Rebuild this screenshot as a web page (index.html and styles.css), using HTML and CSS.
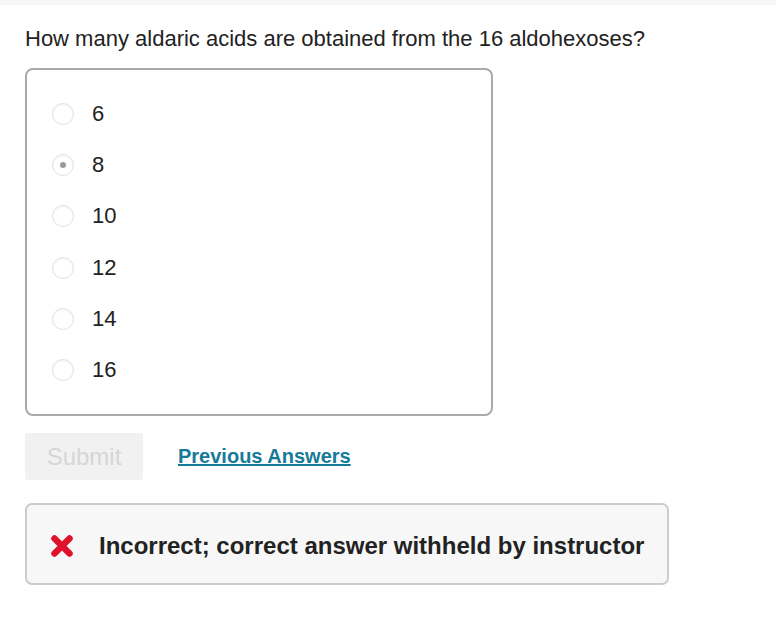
FILE: index.html
```html
<!DOCTYPE html>
<html>
<head>
<meta charset="utf-8">
<link rel="stylesheet" href="styles.css">
</head>
<body>
<div class="topbar"></div>
<main class="content">
  <p class="question">How many aldaric acids are obtained from the 16 aldohexoses?</p>
  <div class="choices">
    <label class="choice"><span class="radio"></span><span class="val">6</span></label>
    <label class="choice"><span class="radio checked"></span><span class="val">8</span></label>
    <label class="choice"><span class="radio"></span><span class="val">10</span></label>
    <label class="choice"><span class="radio"></span><span class="val">12</span></label>
    <label class="choice"><span class="radio"></span><span class="val">14</span></label>
    <label class="choice"><span class="radio"></span><span class="val">16</span></label>
  </div>
  <div class="actions">
    <button class="submit" disabled>Submit</button>
    <a class="prev" href="#">Previous Answers</a>
  </div>
  <div class="feedback">
    <svg class="xicon" width="24" height="24" viewBox="0 0 24 24"><path d="M4.5 4.5 L19.5 19.5 M19.5 4.5 L4.5 19.5" stroke="#e0112b" stroke-width="6.5" stroke-linecap="round"/></svg>
    <span class="fbtext">Incorrect; correct answer withheld by instructor</span>
  </div>
</main>
</body>
</html>
```
FILE: styles.css
```css
html, body { margin: 0; padding: 0; background: #fff; }
body { font-family: "Liberation Sans", Arial, sans-serif; color: #222; }
.topbar { height: 5px; background: #f7f7f7; }
.content { padding: 0 25px; }
.question { margin: 22px 0 0; font-size: 22px; line-height: 24px; color: #222; }
.choices {
  margin-top: 17px;
  width: 468px;
  height: 348px;
  border: 2px solid #aaa;
  border-radius: 8px;
  padding: 33px 0 0 25px;
  box-sizing: border-box;
  display: flex; flex-direction: column; gap: 29.2px;
}
.choice { display: flex; align-items: center; height: 22px; gap: 18px; }
.radio {
  width: 20px; height: 20px; border-radius: 50%;
  border: 1px solid #e2e2e2; box-shadow: inset 0 1px 2px rgba(0,0,0,0.06);
  background: #fff; position: relative; flex: none;
}
.radio.checked::after {
  content: ""; position: absolute; left: 7px; top: 7px; width: 6px; height: 6px; border-radius: 50%; background: #999;
}
.val { font-size: 22px; color: #222; }
.actions { display: flex; align-items: center; margin-top: 17px; gap: 35px; }
.submit {
  width: 118px; height: 47px; border: none; border-radius: 3px;
  background: #f1f1f1; color: #d6d6d6; font-family: "Liberation Sans", Arial, sans-serif; font-size: 24px; padding: 0;
}
.prev { color: #167a99; font-weight: bold; font-size: 20px; text-decoration: underline; }
.feedback {
  margin-top: 23px; width: 644px; height: 82px; box-sizing: border-box;
  border: 2px solid #ccc; border-radius: 7px; background: #f7f7f7;
  display: flex; align-items: center; padding: 3px 0 0 23px; gap: 25px;
}
.xicon { flex: none; }
.fbtext { font-weight: bold; font-size: 24px; color: #222; }
```
